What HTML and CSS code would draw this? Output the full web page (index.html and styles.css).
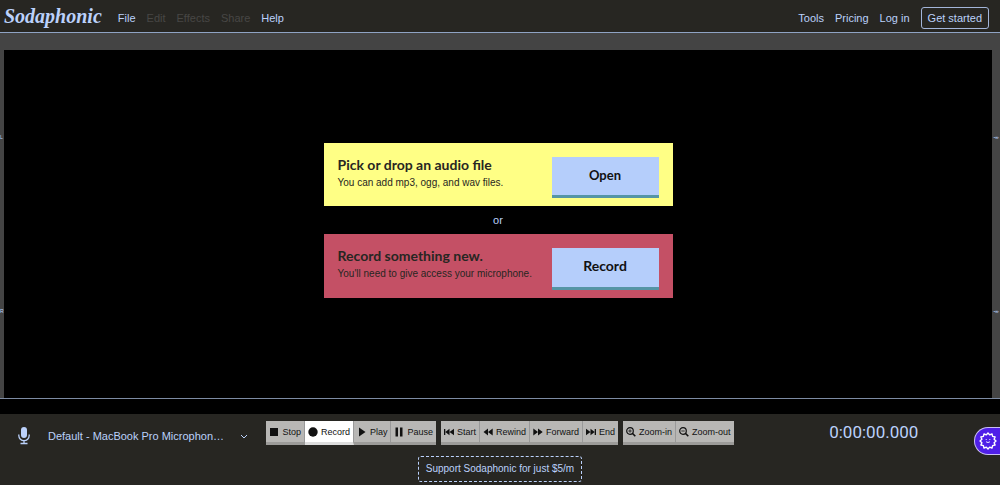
FILE: index.html
```html
<!DOCTYPE html>
<html lang="en">
<head>
	<meta charset="UTF-8">
	<title>Sodaphonic</title>
	<link rel="stylesheet" href="styles.css">
</head>
<body>
	<header class="header">
		<a class="logo" href="#">Sodaphonic</a>
		<nav class="menu">
			<button type="button">File</button>
			<button type="button" disabled>Edit</button>
			<button type="button" disabled>Effects</button>
			<button type="button" disabled>Share</button>
			<button type="button">Help</button>
		</nav>
		<nav class="links">
			<a href="#">Tools</a>
			<a href="#">Pricing</a>
			<a href="#">Log in</a>
			<a class="started" href="#">Get started</a>
		</nav>
	</header>

	<main class="editor">
		<div class="channels left">
			<span>L</span>
			<span>R</span>
		</div>
		<div class="wave">
			<section class="card open">
				<div>
					<h2>Pick or drop an audio file</h2>
					<p>You can add mp3, ogg, and wav files.</p>
				</div>
				<button type="button">Open</button>
			</section>
			<p class="or">or</p>
			<section class="card record">
				<div>
					<h2>Record something new.</h2>
					<p>You'll need to give access your microphone.</p>
				</div>
				<button type="button">Record</button>
			</section>
		</div>
		<div class="channels right">
			<span>-∞</span>
			<span>-∞</span>
		</div>
	</main>
	<div class="scrollbar"></div>

	<footer class="footer">
		<div class="input">
			<label for="mic" aria-label="Microphone">
				<svg class="mic" viewBox="0 0 12 18">
					<rect x="3" y="0" width="6" height="11" rx="3" fill="currentColor"/>
					<path d="M.8 7.5v1a5.2 5.2 0 0 0 10.4 0v-1M6 13.7V16M2.5 16.5h7" fill="none" stroke="currentColor" stroke-width="1.3"/>
				</svg>
			</label>
			<select id="mic">
				<option>Default - MacBook Pro Microphon…</option>
			</select>
			<svg class="chevron" viewBox="0 0 8 5"><path d="M1 1l3 3 3-3" fill="none" stroke="currentColor"/></svg>
		</div>

		<div class="center">
			<div class="toolbar">
				<div class="group">
					<button type="button"><svg viewBox="0 0 10 10"><path d="M1 1h8v8H1z"/></svg>Stop</button>
					<button type="button" class="active"><svg viewBox="0 0 10 10"><circle cx="5" cy="5" r="4.7"/></svg>Record</button>
					<button type="button"><svg viewBox="0 0 10 10"><path d="M2 .5L8.500 5 2 9.500z"/></svg>Play</button>
					<button type="button"><svg viewBox="0 0 10 10"><path d="M1.500 .5h2.500v9H1.500zM6 .5h2.500v9H6z"/></svg>Pause</button>
				</div>
				<div class="group">
					<button type="button"><svg viewBox="0 0 10 10"><path d="M0 2h1.300v6H0zM5.500 1.800v6.400L1.300 5zM10 1.800v6.400L5.500 5z"/></svg>Start</button>
					<button type="button"><svg viewBox="0 0 10 10"><path d="M5 1.500v7L.5 5zM9.700 1.500v7L5 5z"/></svg>Rewind</button>
					<button type="button"><svg viewBox="0 0 10 10"><path d="M.3 1.500v7L5 5zM5 1.500v7L9.700 5z"/></svg>Forward</button>
					<button type="button"><svg viewBox="0 0 10 10"><path d="M0 1.800v6.400L4.500 5zM4.500 1.800v6.400L8.700 5zM8.700 2H10v6H8.700z"/></svg>End</button>
				</div>
				<div class="group">
					<button type="button"><svg viewBox="0 0 10 10"><g fill="none" stroke="#111"><circle cx="4" cy="4" r="3.300" stroke-width="1.200"/><path d="M6.300 6.300l3 3" stroke-width="1.600"/><path d="M2.300 4h3.400M4 2.300v3.400" stroke-width=".8"/></g></svg>Zoom-in</button>
					<button type="button"><svg viewBox="0 0 10 10"><g fill="none" stroke="#111"><circle cx="4" cy="4" r="3.300" stroke-width="1.200"/><path d="M6.300 6.300l3 3" stroke-width="1.600"/><path d="M2.300 4h3.400" stroke-width=".8"/></g></svg>Zoom-out</button>
				</div>
			</div>
			<a class="support" href="#">Support Sodaphonic for just $5/m</a>
		</div>

		<div class="time">0:00:00.000</div>
	</footer>

	<button type="button" class="widget" aria-label="Feedback">
		<svg viewBox="0 0 18 18" fill="none" stroke="#fff" stroke-width="1.400" stroke-linejoin="round">
			<path d="M9 1l1.700 1.900L13 1.900l.6 2.500 2.500.6-1 2.300L17 9l-1.900 1.700 1 2.300-2.500.6-.6 2.500-2.300-1L9 17l-1.700-1.900-2.300 1-.6-2.500-2.500-.6 1-2.300L1 9l1.900-1.700-1-2.300 2.500-.6.6-2.500 2.300 1z"/>
			<path d="M7.200 7v1M10.800 7v1M7 9.500c.8 1.300 3.200 1.300 4 0" stroke-width=".9"/>
		</svg>
	</button>
</body>
</html>
```
FILE: styles.css
```css
*{
	box-sizing: border-box;
	margin: 0;
	padding: 0;
}
body{
	display: flex;
	flex-direction: column;
	min-height: 100vh;
	background: #000;
	color: #bbd1fb;
	font: 11px/14px "Liberation Sans", Arial, sans-serif;
}
button, select{
	font: inherit;
	color: inherit;
	border: none;
	background: none;
}
a{
	color: inherit;
	text-decoration: none;
}

/* top bar */
.header{
	display: flex;
	align-items: center;
	height: 33px;
	padding: 3px 11px 0 4px;
	background: #272622;
	border-bottom: 1px solid #8fa3c4;
}
.logo{
	font: italic bold 20px/24px "Liberation Serif", serif;
	margin-bottom: 4px;
}
.menu{
	display: flex;
	gap: 11px;
	margin-left: 16px;
}
.menu button:disabled{
	color: #474745;
}
.links{
	display: flex;
	align-items: center;
	gap: 11px;
	margin-left: auto;
}
.started{
	padding: 3px 6px;
	border: 1px solid #a3b5d9;
	border-radius: 3px;
}

/* wave area */
.editor{
	flex: 1;
	display: flex;
	padding-top: 17px;
	background: #444;
	border-bottom: 1px solid #7d8ba3;
}
.channels{
	display: flex;
	flex-direction: column;
	justify-content: space-around;
	overflow: hidden;
	font-size: 5px;
	line-height: 6px;
}
.left{
	width: 4px;
	align-items: flex-start;
}
.right{
	width: 8px;
	align-items: center;
	font-weight: bold;
}
.wave{
	flex: 1;
	display: flex;
	flex-direction: column;
	align-items: center;
	justify-content: center;
	padding-bottom: 8px;
	background: #000;
}
.card{
	display: flex;
	justify-content: space-between;
	width: 349px;
	padding: 14px 14px 8px;
	color: #272622;
}
.card h2{
	font: bold 14px/16px Lato, "Open Sans", sans-serif;
}
.card p{
	font-size: 10px;
	line-height: 20px;
}
.card button{
	width: 107px;
	height: 41px;
	padding-bottom: 2px;
	background: #b5cefb;
	border-bottom: 3px solid #5595a5;
	color: #111;
	font: bold 13px/16px Lato, "Open Sans", sans-serif;
}
.open{
	background: #ffff85;
}
.record{
	background: #c45065;
}
.record button{
	height: 42px;
	font-size: 14px;
}
.or{
	padding: 7px 0;
}
.scrollbar{
	height: 15px;
}

/* controls */
.footer{
	display: grid;
	grid-template-columns: 1fr auto 1fr;
	padding: 7px 0 3px;
	background: #272622;
}
.input{
	display: flex;
	align-items: center;
	height: 30px;
	padding: 0 18px;
}
.mic{
	display: block;
	width: 12px;
	height: 18px;
}
.input select{
	flex: 1;
	min-width: 0;
	margin-left: 18px;
	appearance: none;
}
.chevron{
	width: 8px;
	height: 5px;
}
.center{
	display: flex;
	flex-direction: column;
	align-items: center;
	gap: 11px;
}
.toolbar{
	display: flex;
	gap: 5px;
}
.group{
	display: flex;
	background: #b8b7b5;
}
.group button{
	display: flex;
	align-items: center;
	gap: 3px;
	height: 24px;
	padding: 0 3px;
	border-right: 1px solid #999;
	border-bottom: 3px solid #9c9b99;
	color: #111;
	font-size: 9px;
}
.group button:last-child{
	border-right: none;
}
.group svg{
	width: 10px;
	height: 10px;
	fill: #111;
}
.group .active{
	background: #fff;
	border-bottom-color: #ddd;
}
.support{
	padding: 5px 7px;
	border: 1px dashed #bbd1fb;
	border-radius: 3px;
	font-size: 10px;
}
.time{
	padding: 0 0 0 14px;
	font: 17px/22px Roboto, sans-serif;
	text-align: center;
}

/* floating feedback button */
.widget{
	position: fixed;
	right: 0;
	bottom: 30px;
	width: 26px;
	height: 28px;
	padding-left: 4px;
	background: #4f1fe8;
	border: 1px solid #c9bdf5;
	border-right: none;
	border-radius: 14px 0 0 14px;
}
.widget svg{
	display: block;
	width: 18px;
	height: 18px;
}
```
